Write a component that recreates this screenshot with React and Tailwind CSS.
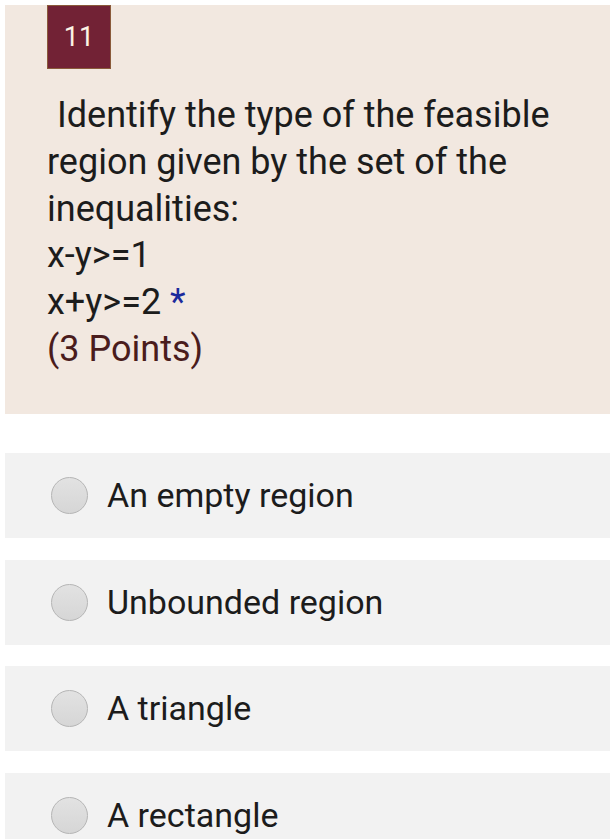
import React from 'react'

const options = ['An empty region', 'Unbounded region', 'A triangle', 'A rectangle']

function Radio() {
  return (
    <span className="block w-[37px] h-[37px] rounded-full border border-[#b5b5b5] bg-gradient-to-b from-[#e2e2e2] to-[#d6d6d6] shrink-0" />
  )
}

export default function App() {
  return (
    <div className="w-[610px] h-[839px] overflow-hidden bg-white pt-[5px] pl-[5px] font-['Roboto',sans-serif] text-[#1c1c1c]">
      {/* Question card */}
      <section className="bg-[#f2e8e0] h-[409px] pl-[42px]">
        <div className="w-[64px] h-[64px] bg-[#722235] border border-[#8a5a3a] flex items-center justify-center text-[#fdf4e4] text-[27px]">
          11
        </div>
        <div className="pt-[23px] text-[36px] leading-[46.8px]">
          <p className="pl-[10px]">Identify the type of the feasible</p>
          <p>region given by the set of the</p>
          <p>inequalities:</p>
          <p>x-y&gt;=1</p>
          <p>
            x+y&gt;=2 <span className="text-[#1c2a9c]">*</span>
          </p>
          <p className="text-[#4a1c1c]">(3 Points)</p>
        </div>
      </section>

      {/* Options */}
      <div className="pt-[39px] flex flex-col gap-[21.5px]">
        {options.map((o) => (
          <div key={o} className="bg-[#f2f2f2] h-[85px] flex items-center pl-[46px] gap-[19px]">
            <Radio />
            <span className="text-[34px]">{o}</span>
          </div>
        ))}
      </div>
    </div>
  )
}
